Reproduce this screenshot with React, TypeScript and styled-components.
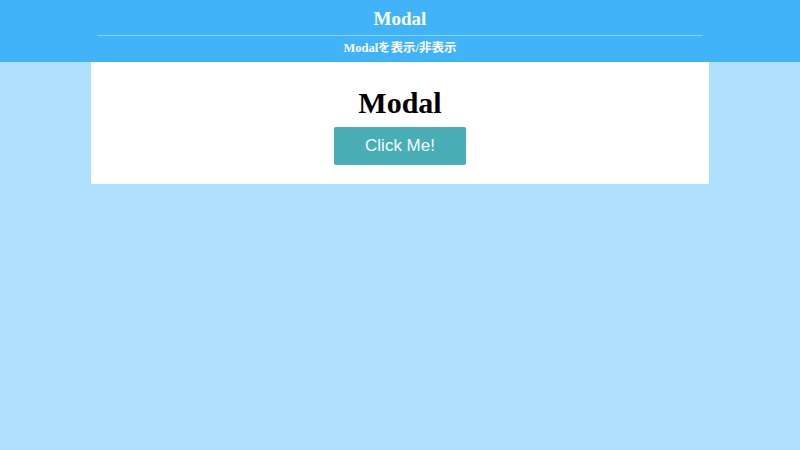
import styled, { createGlobalStyle } from 'styled-components';

const GlobalStyle = createGlobalStyle`
  html, body {
    margin: 0;
    padding: 0;
    background: #afe0fd;
    font-family: "Liberation Serif", "Noto Sans CJK JP", serif;
  }
`;

const Page = styled.div`
  min-height: 450px;
  background: #afe0fd;
`;

const Header = styled.header`
  background: #41b4f9;
  height: 62px;
  box-sizing: border-box;
  padding-top: 8px;
  display: flex;
  flex-direction: column;
  align-items: center;
`;

const HeaderInner = styled.div`
  width: 606px;
  display: flex;
  flex-direction: column;
  align-items: center;
`;

const Title = styled.h1`
  margin: 0;
  color: #ffffff;
  font-size: 19px;
  line-height: 22px;
  font-weight: bold;
`;

const Divider = styled.hr`
  width: 100%;
  margin: 5px 0 0;
  border: none;
  border-top: 1px solid #8ed3fb;
`;

const Subtitle = styled.p`
  margin: 4px 0 0;
  color: #ffffff;
  font-size: 12.5px;
  line-height: 16px;
  font-weight: bold;
`;

const Card = styled.section`
  width: 618px;
  margin: 0 auto;
  background: #ffffff;
  box-sizing: border-box;
  padding: 20px 0 19px;
  display: flex;
  flex-direction: column;
  align-items: center;
`;

const CardHeading = styled.h2`
  margin: 0;
  font-size: 30px;
  line-height: 42px;
  font-weight: bold;
  color: #000000;
`;

const Button = styled.button`
  margin-top: 3px;
  width: 132px;
  height: 38px;
  border: none;
  border-radius: 2px;
  background: #49adb5;
  color: #f4fbfc;
  font-family: "Liberation Sans", Arial, sans-serif;
  font-size: 17px;
  cursor: pointer;
`;

export default function App() {
  return (
    <Page>
      <GlobalStyle />
      <Header>
        <HeaderInner>
          <Title>Modal</Title>
          <Divider />
          <Subtitle>Modalを表示/非表示</Subtitle>
        </HeaderInner>
      </Header>
      <Card>
        <CardHeading>Modal</CardHeading>
        <Button>Click Me!</Button>
      </Card>
    </Page>
  );
}
